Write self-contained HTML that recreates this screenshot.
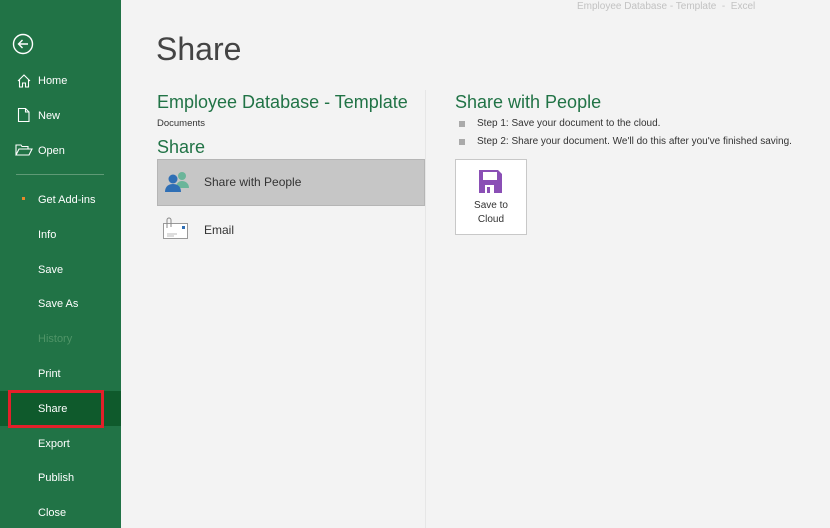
<!DOCTYPE html>
<html><head><meta charset="utf-8"><style>
*{margin:0;padding:0;box-sizing:border-box}
body{width:830px;height:528px;overflow:hidden;background:#f3f3f3;font-family:"Liberation Sans",sans-serif;position:relative}
.side{position:absolute;left:0;top:0;width:121px;height:528px;background:#217346;color:#fff}
.it{position:absolute;left:38px;font-size:11px;color:#fff;line-height:14px}
.t{position:absolute;white-space:nowrap}
</style></head><body>
<div class="side">
<svg style="position:absolute;left:12px;top:33px" width="22" height="22" viewBox="0 0 22 22"><circle cx="11" cy="11" r="9.5" fill="none" stroke="#fff" stroke-width="1.4"/><path d="M16 11H6.5M10.5 7l-4 4 4 4" fill="none" stroke="#fff" stroke-width="1.4"/></svg>
<svg style="position:absolute;left:16px;top:73px" width="16" height="16" viewBox="0 0 16 16"><path d="M2 8L8 2l6 6M3.5 7v7h3v-4h3v4h3V7" fill="none" stroke="#fff" stroke-width="1.1"/></svg>
<div class="it" style="top:74px">Home</div>
<svg style="position:absolute;left:17px;top:107px" width="14" height="16" viewBox="0 0 14 16"><path d="M1.5 1.5h7l3.5 3.5v9.5h-10.5zM8.5 1.5V5H12" fill="none" stroke="#fff" stroke-width="1.1"/></svg>
<div class="it" style="top:109px">New</div>
<svg style="position:absolute;left:15px;top:143px" width="18" height="14" viewBox="0 0 18 14"><path d="M1 12V2h5l1 1.5h6V6M1 12l3-6h13l-3 6z" fill="none" stroke="#fff" stroke-width="1.1"/></svg>
<div class="it" style="top:144px">Open</div>
<div style="position:absolute;left:16px;top:174px;width:88px;height:1px;background:#5f9a76"></div>
<div style="position:absolute;left:22px;top:197px;width:3px;height:3px;background:#e8892a"></div>
<div class="it" style="top:193px">Get Add-ins</div>
<div class="it" style="top:228px">Info</div>
<div class="it" style="top:263px">Save</div>
<div class="it" style="top:297px">Save As</div>
<div class="it" style="top:332px;color:#4f9467">History</div>
<div class="it" style="top:367px">Print</div>
<div style="position:absolute;left:0;top:391px;width:121px;height:35px;background:#0f5a2c"></div>
<div style="position:absolute;left:8px;top:390px;width:96px;height:38px;border:3px solid #e3202a"></div>
<div class="it" style="top:402px">Share</div>
<div class="it" style="top:437px">Export</div>
<div class="it" style="top:471px">Publish</div>
<div class="it" style="top:506px">Close</div>
</div>
<div class="t" style="left:577px;top:1px;font-size:10px;color:#c2c2c2">Employee Database - Template &nbsp;- &nbsp;Excel</div>
<div class="t" style="left:156px;top:31px;font-size:32px;color:#444">Share</div>
<div class="t" style="left:157px;top:92px;font-size:18px;color:#217346">Employee Database - Template</div>
<div class="t" style="left:157px;top:118px;font-size:9.5px;color:#333">Documents</div>
<div class="t" style="left:157px;top:137px;font-size:18px;color:#217346">Share</div>
<div style="position:absolute;left:425px;top:90px;width:1px;height:438px;background:#e6e6e6"></div>
<div style="position:absolute;left:157px;top:159px;width:268px;height:47px;background:#c6c6c6;border:1px solid #b5b5b5"></div>
<svg style="position:absolute;left:163px;top:170px" width="28" height="24" viewBox="0 0 28 24"><circle cx="19" cy="6" r="4" fill="#6bb59a"/><path d="M13 18c0-5 3-7 6-7s7 2 7 7z" fill="#6bb59a"/><circle cx="10" cy="9" r="4.5" fill="#2f6fb5"/><path d="M2 22c0-6 4-8 8-8s8 2 8 8z" fill="#2f6fb5"/></svg>
<div class="t" style="left:204px;top:175px;font-size:12px;color:#333">Share with People</div>
<svg style="position:absolute;left:162px;top:217px" width="28" height="24" viewBox="0 0 28 24"><rect x="1.5" y="6.5" width="24" height="15" fill="#fff" stroke="#999"/><rect x="20" y="9" width="3" height="3" fill="#2f6fb5"/><path d="M5 17h10M5 19h7" stroke="#bbb"/><path d="M5 11V3a2 2 0 014 0v7" fill="none" stroke="#888"/></svg>
<div class="t" style="left:204px;top:223px;font-size:12px;color:#333">Email</div>
<div class="t" style="left:455px;top:92px;font-size:18px;color:#217346">Share with People</div>
<div style="position:absolute;left:459px;top:121px;width:6px;height:6px;background:#aaa"></div>
<div class="t" style="left:477px;top:118px;font-size:10px;color:#333">Step 1: Save your document to the cloud.</div>
<div style="position:absolute;left:459px;top:139px;width:6px;height:6px;background:#aaa"></div>
<div class="t" style="left:477px;top:136px;font-size:10px;color:#333">Step 2: Share your document. We'll do this after you've finished saving.</div>
<div style="position:absolute;left:455px;top:159px;width:72px;height:76px;background:#fff;border:1px solid #c8c8c8"></div>
<svg style="position:absolute;left:479px;top:170px" width="23" height="23" viewBox="0 0 23 23"><path d="M0 0h19l4 4v19H0z" fill="#8a4fb5"/><rect x="4" y="2" width="14" height="8" fill="#fff"/><rect x="6" y="15" width="9" height="8" fill="#fff"/><rect x="8" y="17" width="3" height="6" fill="#8a4fb5"/></svg>
<div class="t" style="left:455px;top:199px;width:72px;text-align:center;font-size:10px;line-height:14px;color:#333">Save to<br>Cloud</div>
</body></html>
